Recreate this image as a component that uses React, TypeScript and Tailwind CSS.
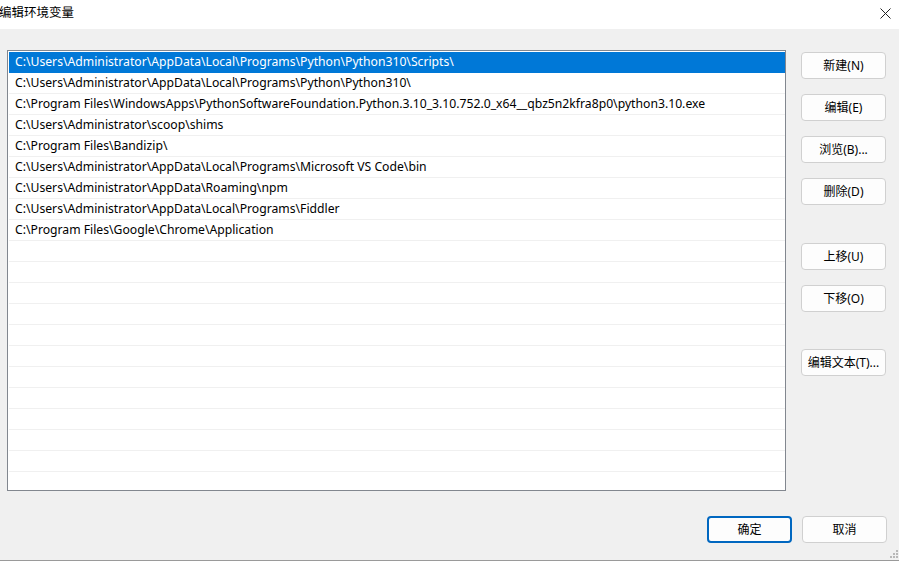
import React from "react";

const paths = [
  "C:\\Users\\Administrator\\AppData\\Local\\Programs\\Python\\Python310\\Scripts\\",
  "C:\\Users\\Administrator\\AppData\\Local\\Programs\\Python\\Python310\\",
  "C:\\Program Files\\WindowsApps\\PythonSoftwareFoundation.Python.3.10_3.10.752.0_x64__qbz5n2kfra8p0\\python3.10.exe",
  "C:\\Users\\Administrator\\scoop\\shims",
  "C:\\Program Files\\Bandizip\\",
  "C:\\Users\\Administrator\\AppData\\Local\\Programs\\Microsoft VS Code\\bin",
  "C:\\Users\\Administrator\\AppData\\Roaming\\npm",
  "C:\\Users\\Administrator\\AppData\\Local\\Programs\\Fiddler",
  "C:\\Program Files\\Google\\Chrome\\Application",
];

const rows = [...paths, ...Array(13).fill("")];

function Btn({ label, primary }: { label: string; primary?: boolean }) {
  return (
    <button
      className={
        "w-[85px] h-[27px] rounded-[4px] bg-[#fdfdfd] text-[12px] text-black flex items-center justify-center " +
        (primary ? "border-2 border-[#0067c0]" : "border border-[#d0d0d0]")
      }
    >
      {label}
    </button>
  );
}

export default function App() {
  return (
    <div
      className="w-[899px] h-[561px] flex flex-col bg-[#f0f0f0] overflow-hidden text-black"
      style={{ fontFamily: '"Noto Sans", "Noto Sans CJK SC", sans-serif' }}
    >
      {/* title bar */}
      <div className="h-[29px] bg-white flex items-center justify-between shrink-0">
        <span className="text-[12.5px] -ml-[1px] pb-[3px]">编辑环境变量</span>
        <svg width="11" height="11" viewBox="0 0 11 11" className="mr-[8px] mb-[3px]">
          <path d="M0.5 0.5L10.5 10.5M10.5 0.5L0.5 10.5" stroke="#222" strokeWidth="1" />
        </svg>
      </div>

      <div className="flex-1 flex pt-[21px] pl-[7px] relative">
        {/* list */}
        <div className="w-[779px] h-[441px] border border-[#82878f] bg-white pl-[1px] pt-[1px] overflow-hidden">
          {rows.map((r, i) => (
            <div
              key={i}
              className={
                "h-[21px] flex items-center pl-[6px] pt-[1px] text-[12.2px] whitespace-nowrap border-b " +
                (i === 0
                  ? "bg-[#0078d7] text-white border-[#0078d7]"
                  : "border-[#f0f0f0]")
              }
            >
              {r}
            </div>
          ))}
        </div>

        {/* side buttons */}
        <div className="flex flex-col pl-[15px] pt-[2px]">
          <div className="flex flex-col gap-[15px]">
            <Btn label="新建(N)" />
            <Btn label="编辑(E)" />
            <Btn label="浏览(B)..." />
            <Btn label="删除(D)" />
          </div>
          <div className="flex flex-col gap-[15px] mt-[38px]">
            <Btn label="上移(U)" />
            <Btn label="下移(O)" />
          </div>
          <div className="mt-[37px]">
            <Btn label="编辑文本(T)..." />
          </div>
        </div>

        {/* bottom buttons */}
        <div className="absolute right-[12px] bottom-[17px] flex gap-[10px]">
          <Btn label="确定" primary />
          <Btn label="取消" />
        </div>

        {/* resize grip */}
        <svg width="10" height="10" className="absolute right-[1px] bottom-[2px]" viewBox="0 0 10 10">
          {[
            [8, 2],
            [8, 5],
            [5, 5],
            [8, 8],
            [5, 8],
            [2, 8],
          ].map(([x, y], i) => (
            <rect key={i} x={x} y={y} width="2" height="2" fill="#b8b8b8" />
          ))}
        </svg>
      </div>
      <div className="h-[1px] bg-[#9a9a9a] shrink-0" />
    </div>
  );
}
